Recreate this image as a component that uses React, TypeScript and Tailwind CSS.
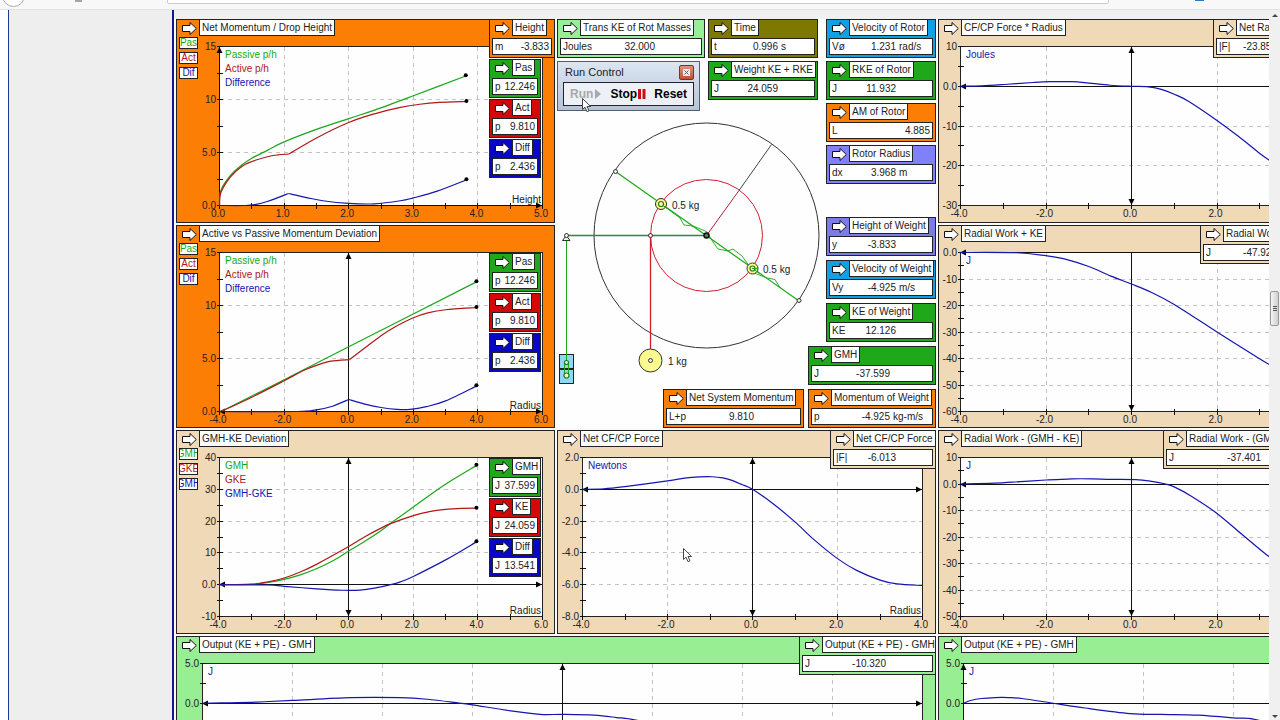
import { useState, type ReactNode } from "react";
import clsx from "clsx";

type Point = [number, number];

interface Series {
  color: string;
  /** Each segment is smoothed on its own, so a kink is a new segment. */
  segments: Point[][];
  marker?: boolean;
}

interface ChartProps {
  width: number;
  /** Left and right edge of the plot inside the panel. */
  left: number;
  right: number;
  height?: number;
  x: [number, number];
  y: [number, number];
  xStep: number;
  yStep: number;
  yGrid?: boolean;
  legend: { text: string; color: string }[];
  xTitle?: string;
  series: Series[];
}

const GREEN = "#18a818";
const RED = "#b01818";
const BLUE = "#1515b0";
const TOP = 26;

const range = (from: number, to: number, step: number) => {
  const out: number[] = [];
  for (let v = from; v <= to + 0.001; v += step) out.push(v);
  return out;
};

const label = (v: number) => (Math.abs(v) < 10 ? v.toFixed(1) : v.toFixed(0));

// Catmull-Rom through the samples, written out as cubic beziers
function smooth(pts: Point[]) {
  let d = `M${pts[0][0]} ${pts[0][1]}`;
  for (let i = 0; i < pts.length - 1; i++) {
    const p0 = pts[i - 1] ?? pts[i];
    const p1 = pts[i];
    const p2 = pts[i + 1];
    const p3 = pts[i + 2] ?? p2;
    d += `C${p1[0] + (p2[0] - p0[0]) / 6} ${p1[1] + (p2[1] - p0[1]) / 6} ${p2[0] - (p3[0] - p1[0]) / 6} ${p2[1] - (p3[1] - p1[1]) / 6} ${p2[0]} ${p2[1]}`;
  }
  return d;
}

function Chart({
  width,
  left,
  right,
  height = 159,
  x,
  y,
  xStep,
  yStep,
  yGrid = true,
  legend,
  xTitle,
  series,
}: ChartProps) {
  const bottom = TOP + height;
  const px = (v: number) => left + ((v - x[0]) / (x[1] - x[0])) * (right - left);
  const py = (v: number) => TOP + ((y[1] - v) / (y[1] - y[0])) * height;
  const snap = (v: number) => Math.round(v) + 0.5;
  const ax = snap(px(0));
  const ay = snap(py(0));

  return (
    <svg width={width - 2} height="201" className="col-start-1 row-start-1 block" role="img">
      <rect x={left + 0.5} y={TOP + 0.5} width={right - left} height={height} fill="#fefefe" stroke="#222" />
      <g stroke="#c4c4c4" strokeDasharray="4 4">
        {range(x[0] + xStep, x[1] - xStep, xStep).map((v) => (
          <line key={v} x1={snap(px(v))} x2={snap(px(v))} y1={TOP + 1} y2={bottom} />
        ))}
        {yGrid &&
          range(y[0] + yStep, y[1] - yStep, yStep).map((v) => (
            <line key={v} x1={left + 1} x2={right} y1={snap(py(v))} y2={snap(py(v))} />
          ))}
      </g>
      <g stroke="#111">
        {range(y[0], y[1], yStep / 2).map((v) => (
          <line key={v} x1={left - 2} x2={left + 4} y1={snap(py(v))} y2={snap(py(v))} />
        ))}
        {range(x[0], x[1], xStep / 2).map((v) => (
          <line key={v} x1={snap(px(v))} x2={snap(px(v))} y1={bottom - 2} y2={bottom + 4} />
        ))}
        <line x1={ax} x2={ax} y1={TOP} y2={bottom} />
        <line x1={left} x2={right} y1={ay} y2={ay} />
      </g>
      <g fill="#000">
        {y[1] !== 0 && <path d={`M${ax} ${TOP + 1}l-3 6h6z`} />}
        {y[0] !== 0 && <path d={`M${ax} ${bottom}l-3 -6h6z`} />}
        {x[0] !== 0 && <path d={`M${left} ${ay}l6 -3v6z`} />}
        {x[1] !== 0 && <path d={`M${right} ${ay}l-6 -3v6z`} />}
      </g>
      {series.map((s) => (
        <g key={s.color} fill="none" stroke={s.color} strokeWidth="1.2">
          {s.segments.map((seg, i) => (
            <path key={i} d={smooth(seg.map(([a, b]) => [px(a) + 0.5, py(b) + 0.5] as Point))} />
          ))}
        </g>
      ))}
      {series
        .filter((s) => s.marker)
        .map((s) => {
          const seg = s.segments[s.segments.length - 1];
          const [a, b] = seg[seg.length - 1];
          return <circle key={s.color} cx={px(a)} cy={py(b)} r="2" fill="#000" />;
        })}
      <g fill="#222">
        {range(y[0], y[1], yStep).map((v) => (
          <text key={v} x={left - 3} y={py(v) + 4} textAnchor="end">
            {label(v)}
          </text>
        ))}
        {range(x[0], x[1], xStep).map((v) => (
          <text key={v} x={px(v) - 1} y={bottom + 12} textAnchor="middle">
            {label(v)}
          </text>
        ))}
        {xTitle && (
          <text x={right - 1} y={bottom - 2} textAnchor="end">
            {xTitle}
          </text>
        )}
      </g>
      {legend.map((l, i) => (
        <text key={l.text} x={left + 6} y={TOP + 12 + i * 14} fill={l.color}>
          {l.text}
        </text>
      ))}
    </svg>
  );
}

function MenuArrow() {
  return (
    <button type="button" aria-label="Menu" className="mr-[2px] ml-[5px] h-[17px] w-[15px] shrink-0">
      <svg width="15" height="13" viewBox="0 0 15 13">
        <path d="M.5 3.500h7.500v-3l6.300 6-6.300 6v-3h-7.500z" fill="#fff" stroke="#111" />
      </svg>
    </button>
  );
}

function Title({ children }: { children: ReactNode }) {
  return (
    <div className="-mt-px h-[17px] shrink-0 border border-[#222] bg-white px-[2px] leading-[15px] whitespace-nowrap">
      {children}
    </div>
  );
}

interface MeterProps {
  title: string;
  unit: string;
  value: string;
  suffix?: string;
  /** Tailwind background of the frame. */
  color: string;
  /** Width of the frame. */
  size?: string;
  /** Width of the column that holds the suffix after the number. */
  tail?: string;
}

function Meter({ title, unit, value, suffix, color, size, tail = "w-0" }: MeterProps) {
  return (
    <section className={clsx("h-[39px] shrink-0 overflow-hidden border border-[#222]", color, size)}>
      <header className="flex h-[18px]">
        <MenuArrow />
        <Title>{title}</Title>
      </header>
      <div className="mx-[2px] flex h-[17px] items-center border border-[#222] bg-white px-[2px]">
        <span>{unit}</span>
        <output className="ml-auto">{value}</output>
        <span className={clsx("shrink-0 whitespace-nowrap", tail, suffix && "pl-[3px]")}>{suffix}</span>
      </div>
    </section>
  );
}

function Panel({
  title,
  color,
  span,
  tags,
  chart,
  children,
}: {
  title: string;
  color: string;
  span?: string;
  tags?: [string, string, string];
  chart: ChartProps;
  children?: ReactNode;
}) {
  return (
    <section className={clsx("grid overflow-hidden border border-[#222]", color, span)}>
      <Chart {...chart} />
      <div className="z-10 col-start-1 row-start-1 flex items-start justify-between">
        <div>
          <header className="flex h-[17px]">
            <MenuArrow />
            <Title>{title}</Title>
          </header>
          {tags && (
            <div className="ml-[2px] flex flex-col items-start gap-[3px]">
              <Tag className="text-[#18a818]">{tags[0]}</Tag>
              <Tag className="text-[#b01818]">{tags[1]}</Tag>
              <Tag className="text-[#1515b0]">{tags[2]}</Tag>
            </div>
          )}
        </div>
        {children}
      </div>
    </section>
  );
}

function Tag({ className, children }: { className: string; children: ReactNode }) {
  return (
    <button
      type="button"
      className={clsx("flex h-3 w-[19px] items-center justify-center overflow-hidden border border-[#222] bg-white", className)}
    >
      {children}
    </button>
  );
}

/** Three small readouts stacked over the right side of a plot. */
function Readouts({ unit, rows }: { unit: string; rows: [string, string][] }) {
  const colors = ["bg-[#1ea81a]", "bg-[#d40808]", "bg-[#0808c4]"];
  return (
    <div className="mr-[13px] flex flex-col gap-px">
      {rows.map(([title, value], i) => (
        <Meter key={title} title={title} unit={unit} value={value} color={colors[i]} size="w-[52px]" />
      ))}
    </div>
  );
}

function Pointer() {
  return (
    <svg width="10" height="15" viewBox="0 0 10 15">
      <path d="M.5.5v11l2.500-2.300 2 4.500 2-.9-2-4.300h3.600z" fill="#fff" stroke="#444" />
    </svg>
  );
}

function RunControl() {
  const [running, setRunning] = useState(true);
  return (
    <section
      aria-label="Run Control"
      className="relative h-[50px] w-[143px] border border-[#555d6c] bg-linear-to-b from-[#dde6f2] to-[#b4c4d8] px-[5px]"
    >
      <header className="flex h-5 items-center justify-between pl-[2px] text-[11px] text-[#222]">
        <span>Run Control</span>
        <button
          type="button"
          aria-label="Close"
          className="flex size-[15px] items-center justify-center rounded-xs border border-[#7a3026] bg-linear-to-b from-[#e0937e] to-[#c05038]"
        >
          <svg width="7" height="7" viewBox="0 0 7 7">
            <rect width="7" height="7" fill="#eee" />
            <path d="M1.500 1.500l4 4m0-4l-4 4" stroke="#555" />
          </svg>
        </button>
      </header>
      <div className="flex h-6 items-center justify-between border border-[#222] bg-[#edf1f7] px-[6px] text-[12px] font-bold text-black">
        <button type="button" disabled={running} onClick={() => setRunning(true)} className="flex items-center disabled:text-[#a8a8a8]">
          Run
          <svg width="8" height="12" viewBox="0 0 8 12" className="ml-px">
            <path d="M1 1l6 5-6 5z" fill="currentColor" />
          </svg>
        </button>
        <button type="button" onClick={() => setRunning(false)} className="flex items-center">
          Stop
          <svg width="8" height="12" viewBox="0 0 8 12" className="ml-px">
            <path d="M0 1h3v10h-3zM4.500 1h3v10h-3z" fill="#c81010" />
          </svg>
        </button>
        <button type="button">Reset</button>
      </div>
      <div className="pointer-events-none absolute top-9 left-6">
        <Pointer />
      </div>
    </section>
  );
}

/** Rotor with two sliding masses, driven by a falling weight. */
function Mechanism() {
  return (
    <svg viewBox="557 19 379 409" width="379" height="409" className="col-start-1 row-start-1 block" role="img">
      <g fill="none">
        <circle cx="706.500" cy="235.500" r="112.500" stroke="#333" />
        <circle cx="706.500" cy="235.500" r="56" stroke="#d02030" />
        <path d="M771.500 144.500L739 190.500" stroke="#444" />
        <path d="M739 190.500L706.500 235.500" stroke="#b02030" />
        <path d="M650.500 236v124" stroke="#d02030" strokeWidth="1.300" />
        <path d="M566 235.500h140" stroke="#2a8a3a" strokeWidth="1.300" />
        <path d="M566.500 236v118" stroke="#18a818" />
        <path d="M615.500 171.500L799 301" stroke="#18a818" strokeWidth="1.200" />
        <path
          d="M661 204L680 218L684 225L693 226L703 230L707 232L713 242L718 249L728 251L733 249L742 256L747 263L752 268L754 273L767 278L775 279.500L779 286L782 289"
          stroke="#18a818"
          strokeWidth=".9"
        />
      </g>
      <rect x="559.500" y="354.500" width="14" height="14" fill="#8fd8f4" stroke="#222" />
      <rect x="559.500" y="369.500" width="14" height="14" fill="#8fd8f4" stroke="#222" />
      <path d="M566.500 354v9M564.500 363v12M568.500 363v12" stroke="#18a818" fill="none" />
      <g fill="#fafac0" stroke="#1a7a2a" strokeWidth="1.200">
        <circle cx="566.500" cy="362.500" r="2" />
        <circle cx="566.500" cy="375.500" r="2.500" />
      </g>
      <path d="M562.500 240.500l3-4h1.500l3 4z" fill="#eee" stroke="#333" />
      <circle cx="650.500" cy="360.500" r="11.500" fill="#fafa90" stroke="#333" />
      <g fill="#fafa80" stroke="#333">
        <circle cx="661" cy="204" r="5.500" />
        <circle cx="752.500" cy="268.500" r="5.500" />
      </g>
      <g fill="#f6fac0" stroke="#2a7a20" strokeWidth="1.200">
        <circle cx="661" cy="204" r="2.500" />
        <circle cx="752.500" cy="268.500" r="2.500" />
      </g>
      <path d="M663 205.500l6 4M752 268.500h6M755 270l5 4" stroke="#18a818" />
      <g fill="#eee" stroke="#333">
        <circle cx="615.500" cy="171.500" r="2" />
        <circle cx="799" cy="300.500" r="2" />
        <circle cx="566.500" cy="235.500" r="2" />
        <circle cx="650.500" cy="235.500" r="2" />
        <circle cx="650.500" cy="360.500" r="2" />
      </g>
      <circle cx="706.500" cy="235.500" r="2.500" fill="#4a8a50" stroke="#111" strokeWidth="1.500" />
      <g fill="#222">
        <text x="672" y="209">0.5 kg</text>
        <text x="763" y="273">0.5 kg</text>
        <text x="668" y="365">1 kg</text>
      </g>
    </svg>
  );
}

function Simulation() {
  return (
    <section aria-label="Simulation" className="col-start-2 row-span-2 row-start-1 grid bg-[#fefefe]">
      <Mechanism />
      <div className="z-10 col-start-1 row-start-1 flex justify-between">
        <div className="flex flex-col justify-between">
          <div className="flex gap-[3px]">
            <div className="flex flex-col gap-[3px]">
              <Meter title="Trans KE of Rot Masses" unit="Joules" value="32.000" color="bg-[#98ee98]" size="w-[148px]" tail="w-11" />
              <RunControl />
            </div>
            <div className="flex flex-col gap-[3px]">
              <Meter title="Time" unit="t" value="0.996" suffix="s" color="bg-[#7c7800]" size="w-[110px]" tail="w-[34px]" />
              <Meter title="Weight KE + RKE" unit="J" value="24.059" color="bg-[#1ea81a]" size="w-[110px]" tail="w-[34px]" />
            </div>
          </div>
          <Meter title="Net System Momentum" unit="L+p" value="9.810" color="bg-[#fc7e04]" size="w-[141px] self-end mr-[14px]" tail="w-11" />
        </div>
        <div className="flex w-[110px] flex-col items-end justify-between">
          <div className="flex flex-col gap-[3px]">
            <Meter title="Velocity of Rotor" unit="Vø" value="1.231" suffix="rad/s" color="bg-[#12a0e4]" size="w-[110px]" tail="w-[34px]" />
            <Meter title="RKE of Rotor" unit="J" value="11.932" color="bg-[#1ea81a]" size="w-[110px]" tail="w-[34px]" />
            <Meter title="AM of Rotor" unit="L" value="4.885" color="bg-[#fc7e04]" size="w-[110px]" />
            <Meter title="Rotor Radius" unit="dx" value="3.968" suffix="m" color="bg-[#8080f8]" size="w-[110px]" tail="w-[34px]" />
          </div>
          <div className="flex flex-col items-end gap-1">
            <Meter title="Height of Weight" unit="y" value="-3.833" color="bg-[#7c7ce8]" size="w-[110px]" tail="w-[34px]" />
            <Meter title="Velocity of Weight" unit="Vy" value="-4.925" suffix="m/s" color="bg-[#12a0e4]" size="w-[110px]" tail="w-[34px]" />
            <Meter title="KE of Weight" unit="KE" value="12.126" color="bg-[#1ea81a]" size="w-[110px]" tail="w-[34px]" />
            <Meter title="GMH" unit="J" value="-37.599" color="bg-[#1ea81a]" size="w-32" tail="w-10" />
            <Meter title="Momentum of Weight" unit="p" value="-4.925" suffix="kg-m/s" color="bg-[#fc7e04]" size="w-32" tail="w-10" />
          </div>
        </div>
      </div>
    </section>
  );
}

const momentumLegend = [
  { text: "Passive p/h", color: GREEN },
  { text: "Active p/h", color: RED },
  { text: "Difference", color: BLUE },
];

const dropHeight: ChartProps = {
  width: 379, left: 42, right: 365, x: [0, 5], y: [0, 15], xStep: 1, yStep: 5, xTitle: "Height",
  legend: momentumLegend,
  series: [
    { color: GREEN, marker: true, segments: [[[0, 0], [0.02, 1.4], [0.17, 2.83], [0.35, 3.84], [0.5, 4.46], [0.74, 5.2], [1, 6], [1.51, 7.2], [2, 8.2], [2.4, 9], [3, 10.35], [3.82, 12.24]]] },
    { color: RED, marker: true, segments: [[[0, 0], [0.02, 1.2], [0.17, 2.7], [0.35, 3.7], [0.5, 4.15], [0.74, 4.6], [0.9, 4.77], [1.07, 4.85]], [[1.07, 4.85], [1.51, 6.4], [2, 7.83], [2.4, 8.65], [2.8, 9.25], [3.1, 9.55], [3.4, 9.72], [3.83, 9.81]]] },
    { color: BLUE, marker: true, segments: [[[0, 0], [0.4, 0], [0.55, 0.08], [0.75, 0.4], [1.07, 1.13]], [[1.07, 1.13], [1.35, 0.75], [1.6, 0.45], [2, 0.2], [2.4, 0.16], [2.8, 0.45], [3, 0.72], [3.37, 1.35], [3.83, 2.43]]] },
  ],
};

const deviation: ChartProps = {
  width: 379, left: 42, right: 365, x: [-4, 6], y: [0, 15], xStep: 2, yStep: 5, xTitle: "Radius",
  legend: momentumLegend,
  series: [
    { color: GREEN, marker: true, segments: [[[-3.95, 0], [-2, 3], [0, 6.1], [3.97, 12.25]]] },
    { color: RED, marker: true, segments: [[[-3.95, 0], [-3, 1.35], [-2, 2.9], [-1.4, 3.87], [-1, 4.35], [-0.55, 4.75], [0.03, 4.9]], [[0.03, 4.9], [1, 7.14], [1.4, 7.92], [2, 8.84], [2.45, 9.3], [3, 9.6], [3.97, 9.81]]] },
    { color: BLUE, marker: true, segments: [[[-4, 0], [-1.6, 0], [-1, 0.16], [-0.5, 0.5], [0, 1.13]], [[0, 1.13], [0.5, 0.7], [1, 0.38], [1.5, 0.2], [1.9, 0.2], [2.4, 0.46], [3, 1], [3.97, 2.42]]] },
  ],
};

const gmhKe: ChartProps = {
  width: 379, left: 42, right: 365, x: [-4, 6], y: [-10, 40], xStep: 2, yStep: 10, xTitle: "Radius",
  legend: [
    { text: "GMH", color: GREEN },
    { text: "GKE", color: RED },
    { text: "GMH-GKE", color: BLUE },
  ],
  series: [
    { color: GREEN, marker: true, segments: [[[-4, 0], [-3, 0.1], [-2.5, 0.7], [-2, 1.7], [-1.5, 3.1], [-1, 5], [-0.46, 7.7], [0, 10.6], [0.5, 13.7], [1, 17], [1.3, 19.3], [2, 24.4], [2.95, 31.3], [3.97, 37.6]]] },
    { color: RED, marker: true, segments: [[[-4, 0], [-3, 0.15], [-2.5, 0.9], [-2, 2.1], [-1.5, 4], [-1, 6.4], [0, 12], [0.5, 15.1], [1, 17.8], [1.3, 19.2], [2, 21.7], [2.5, 23], [3, 23.7], [3.5, 24], [3.97, 24.06]]] },
    { color: BLUE, marker: true, segments: [[[-4, 0], [-2.5, -0.1], [-2, -0.5], [-1, -1.3], [-0.2, -1.75], [0.35, -1.7], [0.8, -1.1], [1.3, 0], [1.6, 0.9], [2, 2.6], [3, 7.8], [3.97, 13.54]]] },
  ],
};

const netForce: ChartProps = {
  width: 379, left: 24, right: 364, x: [-4, 4], y: [-8, 2], xStep: 2, yStep: 2, xTitle: "Radius",
  legend: [{ text: "Newtons", color: BLUE }],
  series: [
    { color: BLUE, segments: [[[-4, 0], [-3.5, 0.03], [-3, 0.17], [-2, 0.53], [-1.6, 0.7], [-1.25, 0.78], [-0.95, 0.79], [-0.7, 0.72], [-0.5, 0.58], [-0.25, 0.3], [0, 0], [0.5, -0.94], [1, -2.05], [1.44, -3.15], [2, -4.36], [2.45, -5.1], [3, -5.71], [3.4, -5.95], [4, -6.05]]] },
  ],
};

const forceRadius: ChartProps = {
  width: 379, left: 21, right: 363, x: [-4, 4], y: [-30, 10], xStep: 2, yStep: 10,
  legend: [{ text: "Joules", color: BLUE }],
  series: [
    { color: BLUE, segments: [[[-4, 0], [-3.5, 0.1], [-2.9, 0.5], [-2.3, 0.95], [-1.9, 1.15], [-1.4, 1.15], [-1, 0.8], [-0.5, 0.25], [0, 0], [0.35, -0.1], [0.7, -0.8], [1, -2], [1.35, -3.9], [2, -8.6], [2.5, -12.6], [3, -16.9], [3.24, -18.7], [4, -23.8]]] },
  ],
};

const workPlusKe: ChartProps = {
  width: 379, left: 21, right: 363, x: [-4, 4], y: [-60, 0], xStep: 2, yStep: 10,
  legend: [{ text: "J", color: BLUE }],
  series: [
    { color: BLUE, segments: [[[-4, 0], [-2.7, -0.1], [-2, -1.2], [-1.57, -2.4], [-1, -5.3], [-0.48, -8.9], [0, -11.9], [0.46, -15], [1, -19.6], [2, -30], [2.64, -36.5], [3.24, -42.4], [4, -47.9]]] },
  ],
};

const workMinusGmh: ChartProps = {
  width: 379, left: 21, right: 363, x: [-4, 4], y: [-50, 10], xStep: 2, yStep: 10,
  legend: [{ text: "J", color: BLUE }],
  series: [
    { color: BLUE, segments: [[[-4, 0], [-3.2, 0.3], [-2.6, 0.9], [-2, 1.5], [-1.4, 1.95], [-0.9, 1.95], [-0.5, 1.75], [0.1, 1.65], [0.4, 1.2], [0.8, 0], [1, -1.1], [1.4, -4.6], [2, -11.1], [2.56, -18.7], [3, -24.6], [3.24, -27.7], [4, -37.4]]] },
  ],
};

const outputRadius: ChartProps = {
  width: 760, left: 25, right: 745, x: [-4, 4], y: [-15, 5], xStep: 1, yStep: 5, yGrid: false,
  legend: [{ text: "J", color: BLUE }],
  series: [
    { color: BLUE, segments: [[[-4, 0], [-3.75, 0.05], [-3.4, 0.15], [-3, 0.35], [-2.35, 0.7], [-1.8, 0.7], [-1.5, 0.5], [-1.15, 0.02], [-1, -0.2], [-0.58, -0.95], [-0.25, -1.4], [0, -1.4], [0.35, -1.5], [0.6, -1.8], [0.85, -2.2], [2, -5], [4, -10.3]]] },
  ],
};

const outputTime: ChartProps = {
  width: 379, left: 24, right: 384, x: [0, 4], y: [-15, 5], xStep: 1, yStep: 5, yGrid: false,
  legend: [{ text: "J", color: BLUE }],
  series: [
    { color: BLUE, segments: [[[0, 0], [0.08, 0.35], [0.2, 0.6], [0.35, 0.72], [0.5, 0.72], [0.65, 0.6], [1, 0], [1.35, -0.6], [1.85, -1.3], [2.2, -1.4], [2.6, -1.5], [3, -1.85], [3.3, -2.2], [4, -5]]] },
  ],
};

function BrowserBar() {
  return (
    <header className="flex h-[10px] shrink-0 items-start overflow-hidden border-b border-[#e2e2e2] bg-[#f8f8f8]">
      <button type="button" aria-label="Back" className="-mt-4 ml-[2px] size-[23px] shrink-0 rounded-full border border-[#aaa] bg-white" />
      <svg width="16" height="2" className="mx-[47px] shrink-0">
        <path d="M3 1h7" stroke="#555" />
      </svg>
      <input aria-label="Address" className="-mt-4 ml-8 h-5 grow rounded-xs border border-[#ccc] bg-white" />
      <div className="flex w-[171px] shrink-0 gap-8 pl-[86px]">
        <svg width="10" height="2">
          <path d="M0 .5h9" stroke="#2a78b8" />
        </svg>
      </div>
    </header>
  );
}

function ScrollRail() {
  return (
    <div className="flex w-[11px] shrink-0 flex-col items-center bg-[#f0f0f0]">
      <button type="button" aria-label="Scroll up" className="h-3 w-full">
        <svg width="11" height="12">
          <path d="M3 7l3-3 3 3z" fill="#444" />
        </svg>
      </button>
      <div className="grow-[269]" />
      <div className="flex h-[35px] w-[9px] flex-col items-center justify-center gap-px rounded-xs border border-[#999] bg-linear-to-r from-[#f4f4f4] to-[#cfcfcf]">
        <i className="h-px w-1 bg-[#555]" />
        <i className="h-px w-1 bg-[#555]" />
        <i className="h-px w-1 bg-[#555]" />
      </div>
      <div className="grow-[384]" />
      <button type="button" aria-label="Scroll down" className="h-[10px] w-full">
        <svg width="11" height="10">
          <path d="M3 5l3 3 3-3z" fill="#444" />
        </svg>
      </button>
    </div>
  );
}

const BEIGE = "bg-[#efd9b7]";
const ORANGE = "bg-[#fc7e04]";
const MINT = "bg-[#98ee92]";

export default function App() {
  return (
    <div className="flex h-screen flex-col overflow-hidden bg-white text-[10px] leading-[14px] text-[#222] font-['Liberation_Sans',sans-serif]">
      <BrowserBar />
      <div className="flex min-h-0 grow">
        <aside className="ml-2 w-[166px] shrink-0 border-x-1 border-r-2 border-l-[#1c3a90] border-r-[#1414a0] bg-[#eeeeee]" />
        <main className="min-w-0 grow overflow-hidden bg-[#f0f0f0] pt-[9px]">
          <div className="grid w-max grid-cols-[379px_379px_379px] grid-rows-[204px_203px_204px_204px] gap-[2px] bg-[#fafafa] pl-[2px]">
            <Panel title="Net Momentum / Drop Height" color={ORANGE} tags={["Pas", "Act", "Dif"]} chart={dropHeight}>
              <div className="-mt-px -mr-px flex flex-col items-start gap-px">
                <Meter title="Height" unit="m" value="-3.833" color={ORANGE} size="w-[66px]" />
                <Readouts unit="p" rows={[["Pas", "12.246"], ["Act", "9.810"], ["Diff", "2.436"]]} />
              </div>
            </Panel>
            <Simulation />
            <Panel title="CF/CP Force * Radius" color={BEIGE} span="col-start-3" chart={forceRadius}>
              <div className="-mt-px -mr-px">
                <Meter title="Net Radial" unit="|F|" value="-23.859" color={BEIGE} size="w-[104px]" tail="w-[34px]" />
              </div>
            </Panel>
            <Panel title="Active vs Passive Momentum Deviation" color={ORANGE} tags={["Pas", "Act", "Dif"]} chart={deviation}>
              <div className="pt-[27px]">
                <Readouts unit="p" rows={[["Pas", "12.246"], ["Act", "9.810"], ["Diff", "2.436"]]} />
              </div>
            </Panel>
            <Panel title="Radial Work + KE" color={BEIGE} span="col-start-3" chart={workPlusKe}>
              <div className="-mt-px -mr-px">
                <Meter title="Radial Work + KE" unit="J" value="-47.920" color={BEIGE} size="w-[117px]" tail="w-[34px]" />
              </div>
            </Panel>
            <Panel title="GMH-KE Deviation" color={BEIGE} tags={["GMH", "GKE", "GMH"]} chart={gmhKe}>
              <div className="pt-[27px]">
                <Readouts unit="J" rows={[["GMH", "37.599"], ["KE", "24.059"], ["Diff", "13.541"]]} />
              </div>
            </Panel>
            <Panel title="Net CF/CP Force" color={BEIGE} chart={netForce}>
              <div className="-mt-px -mr-px">
                <Meter title="Net CF/CP Force" unit="|F|" value="-6.013" color={BEIGE} size="w-[106px]" tail="w-[34px]" />
              </div>
            </Panel>
            <Panel title="Radial Work - (GMH - KE)" color={BEIGE} chart={workMinusGmh}>
              <div className="-mt-px -mr-px">
                <Meter title="Radial Work - (GMH - KE)" unit="J" value="-37.401" color={BEIGE} size="w-[154px]" tail="w-[50px]" />
              </div>
            </Panel>
            <Panel title="Output (KE + PE) - GMH" color={MINT} span="col-span-2" chart={outputRadius}>
              <div className="-mt-px -mr-px">
                <Meter title="Output (KE + PE) - GMH" unit="J" value="-10.320" color={MINT} size="w-[137px]" tail="w-11" />
              </div>
            </Panel>
            <Panel title="Output (KE + PE) - GMH" color={MINT} chart={outputTime} />
          </div>
        </main>
        <ScrollRail />
      </div>
      <div className="pointer-events-none absolute top-[548px] left-[683px]">
        <Pointer />
      </div>
    </div>
  );
}
